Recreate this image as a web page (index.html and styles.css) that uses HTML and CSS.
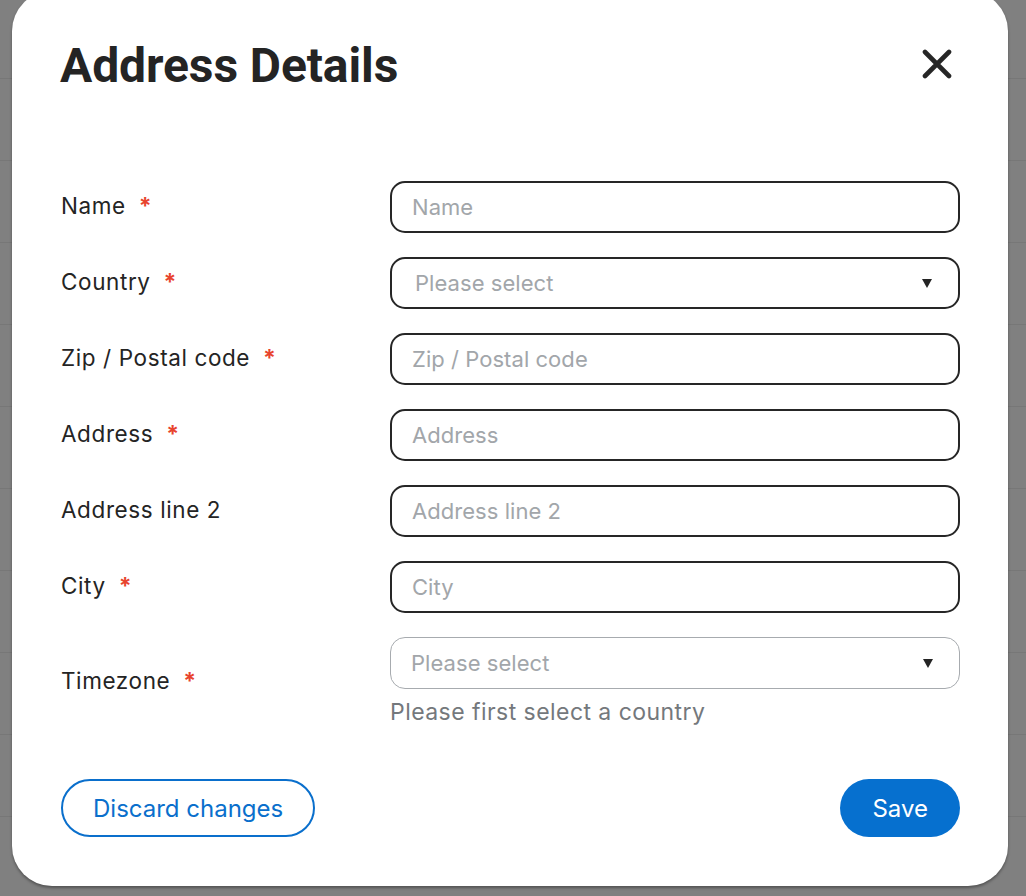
FILE: index.html
```html
<!DOCTYPE html>
<html lang="en">
<head>
<meta charset="utf-8">
<title>Address Details</title>
<link rel="stylesheet" href="styles.css">
</head>
<body>
<div class="backdrop">
  <div class="modal" role="dialog" aria-labelledby="modal-title">
    <header class="modal-header">
      <h1 id="modal-title" class="modal-title">Address Details</h1>
      <button class="close-btn" aria-label="Close">
        <svg viewBox="0 0 30 30" width="30" height="30" aria-hidden="true">
          <path d="M3 3 L27 27 M27 3 L3 27" stroke="#262626" stroke-width="4.6" stroke-linecap="round" fill="none"/>
        </svg>
      </button>
    </header>

    <form class="form">
      <div class="row">
        <label class="label">Name <span class="req">*</span></label>
        <div class="field"><input class="input" type="text" placeholder="Name"></div>
      </div>
      <div class="row">
        <label class="label">Country <span class="req">*</span></label>
        <div class="field"><div class="select"><span class="select-text">Please select</span><span class="caret"></span></div></div>
      </div>
      <div class="row">
        <label class="label">Zip / Postal code <span class="req">*</span></label>
        <div class="field"><input class="input" type="text" placeholder="Zip / Postal code"></div>
      </div>
      <div class="row">
        <label class="label">Address <span class="req">*</span></label>
        <div class="field"><input class="input" type="text" placeholder="Address"></div>
      </div>
      <div class="row">
        <label class="label">Address line 2</label>
        <div class="field"><input class="input" type="text" placeholder="Address line 2"></div>
      </div>
      <div class="row">
        <label class="label">City <span class="req">*</span></label>
        <div class="field"><input class="input" type="text" placeholder="City"></div>
      </div>
      <div class="row">
        <label class="label">Timezone <span class="req">*</span></label>
        <div class="field">
          <div class="select select-disabled"><span class="select-text">Please select</span><span class="caret"></span></div>
          <div class="helper">Please first select a country</div>
        </div>
      </div>
    </form>

    <footer class="modal-footer">
      <button class="btn btn-outline" type="button">Discard changes</button>
      <button class="btn btn-primary" type="button">Save</button>
    </footer>
  </div>
</div>
</body>
</html>
```

FILE: styles.css
```css
* { box-sizing: border-box; }

html, body {
  margin: 0;
  padding: 0;
}

body {
  width: 1026px;
  height: 896px;
  overflow: hidden;
  background-color: #808080;
  background-image: repeating-linear-gradient(to bottom, transparent 0, transparent 81px, #777777 81px, #777777 82px);
  background-position: 0 -3px;
  font-family: "Inter", "Liberation Sans", sans-serif;
  color: #242424;
}

.backdrop {
  padding-left: 12px;
}

.modal {
  margin-top: -9px;
  width: 996px;
  height: 895px;
  background: #ffffff;
  border-radius: 40px;
  box-shadow: 0 2px 3px rgba(0, 0, 0, 0.35);
  padding: 46px 48px 0 48px;
  display: flex;
  flex-direction: column;
}

.modal-header {
  display: flex;
  align-items: center;
  justify-content: space-between;
  height: 58px;
}

.modal-title {
  margin: 0;
  font-family: "Roboto", "Liberation Sans", sans-serif;
  font-weight: 700;
  font-size: 48px;
  line-height: 58px;
  color: #242424;
  letter-spacing: -0.1px;
}

.close-btn {
  width: 30px;
  height: 30px;
  padding: 0;
  margin-right: 8px;
  margin-top: -4px;
  border: 0;
  background: transparent;
  display: flex;
  align-items: center;
  justify-content: center;
}

.form {
  margin-top: 86px;
  display: flex;
  flex-direction: column;
  gap: 24px;
}

.row {
  display: grid;
  grid-template-columns: 330px 1fr;
  align-items: center;
}

.label {
  font-size: 22.5px;
  line-height: 28px;
  letter-spacing: 0.6px;
  color: #242424;
  padding-left: 1px;
  margin-top: -2px;
}

.req {
  color: #e8442e;
  font-weight: 700;
  font-size: 23px;
  margin-left: 6px;
}

.input,
.select {
  display: flex;
  align-items: center;
  width: 570px;
  height: 52px;
  border: 2px solid #262626;
  border-radius: 15px;
  padding: 0 20px;
  font-family: "Inter", "Liberation Sans", sans-serif;
  font-size: 22px;
  letter-spacing: 0.05px;
  color: #242424;
  background: #fff;
  outline: none;
}

.input::placeholder {
  color: #a2a6aa;
  opacity: 1;
}

.select {
  justify-content: space-between;
  padding: 0 26px 0 23px;
}

.select-text {
  color: #a2a6aa;
}

.caret {
  width: 0;
  height: 0;
  border-left: 5px solid transparent;
  border-right: 5px solid transparent;
  border-top: 9px solid #242424;
}

.select-disabled {
  border: 1.5px solid #a7abaf;
  padding-left: 20px;
}

.helper {
  font-size: 23px;
  line-height: 30px;
  color: #74787c;
  padding: 8px 0 0 0;
  letter-spacing: 0.45px;
}

.modal-footer {
  margin-top: 52px;
  display: flex;
  justify-content: space-between;
  align-items: center;
}

.btn {
  height: 58px;
  border-radius: 29px;
  font-family: "Inter", "Liberation Sans", sans-serif;
  font-size: 24px;
  padding: 0 30px;
  cursor: pointer;
}

.btn-outline {
  background: #fff;
  color: #0a6fcc;
  border: 2px solid #0a6fcc;
  margin-left: 1px;
}

.btn-primary {
  background: #0670cf;
  color: #ffffff;
  border: 0;
  padding: 0 32px;
}
```
